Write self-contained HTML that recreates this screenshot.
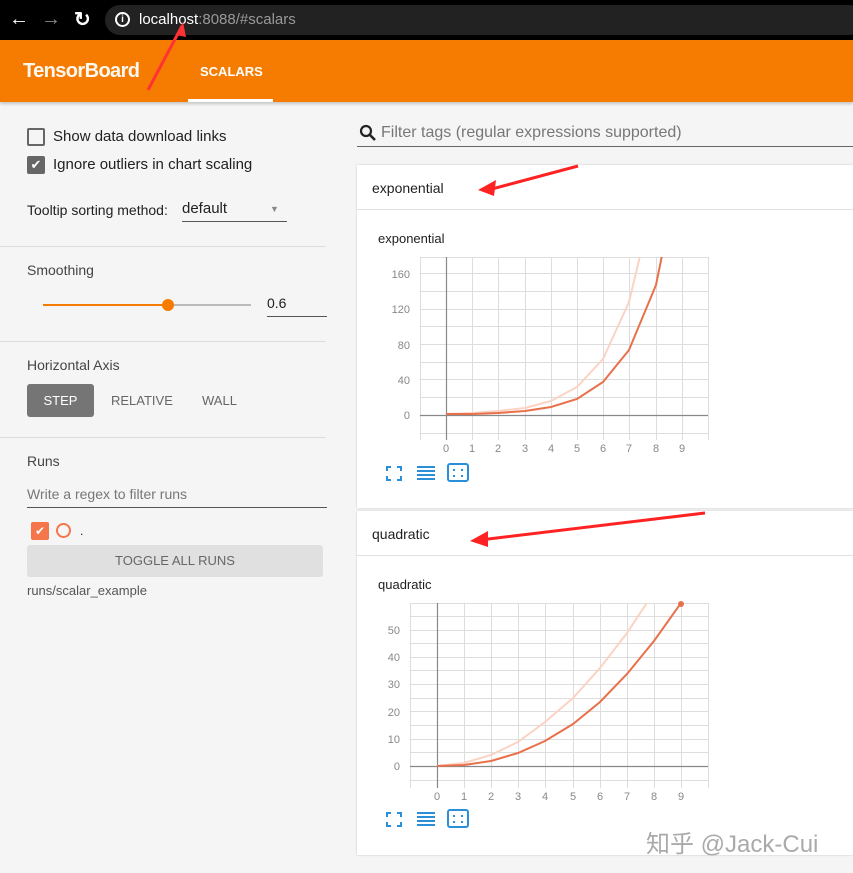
<!DOCTYPE html>
<html><head><meta charset="utf-8"><style>
*{margin:0;padding:0;box-sizing:border-box}
body{width:853px;height:873px;overflow:hidden;background:#f5f5f5;font-family:"Liberation Sans",sans-serif;position:relative;color:#212121}
.a{position:absolute;white-space:nowrap}
.hr{position:absolute;left:0;width:326px;height:1px;background:#ddd}
</style></head><body>
<div class="a" style="left:0;top:0;width:853px;height:40px;background:#000"></div>
<div class="a" style="left:105px;top:5px;width:760px;height:30px;background:#222;border-radius:15px"></div>
<div class="a" style="left:9px;top:8px;color:#fff;font-size:20px">&#8592;</div>
<div class="a" style="left:41px;top:8px;color:#888;font-size:20px">&#8594;</div>
<div class="a" style="left:74px;top:7px;color:#fff;font-size:20px;font-weight:bold">&#8635;</div>
<div class="a" style="left:115px;top:12px;width:15px;height:15px;border:2px solid #fff;border-radius:50%;color:#fff;font-size:10px;text-align:center;line-height:11px;font-weight:bold">i</div>
<div class="a" style="left:139px;top:11px;font-size:15px;color:#fff">localhost<span style="color:#999">:8088/#scalars</span></div>
<div class="a" style="left:0;top:40px;width:853px;height:62px;background:#f57c00;box-shadow:0 2px 3px rgba(0,0,0,.2)"></div>
<div class="a" style="left:23px;top:60px;font-size:20px;color:#fff;font-weight:bold;letter-spacing:-.6px;opacity:.95">TensorBoard</div>
<div class="a" style="left:200px;top:64px;font-size:13px;color:#fff;font-weight:bold">SCALARS</div>
<div class="a" style="left:188px;top:99px;width:85px;height:3px;background:#fff"></div>
<svg class="a" style="left:140px;top:20px" width="50" height="75"><path d="M148 90 L182 26" transform="translate(-140,-20)" stroke="#f33" stroke-width="3"/><path d="M176 35 L183 22 L186 37Z" transform="translate(-140,-20)" fill="#f33"/></svg>

<div class="a" style="left:27px;top:128px;width:18px;height:18px;border:2px solid #666;border-radius:2px"></div>
<div class="a" style="left:53px;top:128px;font-size:15px">Show data download links</div>
<div class="a" style="left:27px;top:156px;width:18px;height:18px;background:#666;border-radius:2px;color:#fff;font-size:13px;text-align:center;line-height:18px">&#10004;</div>
<div class="a" style="left:53px;top:156px;font-size:15px">Ignore outliers in chart scaling</div>
<div class="a" style="left:27px;top:202px;font-size:14px">Tooltip sorting method:</div>
<div class="a" style="left:182px;top:200px;font-size:15px">default</div>
<div class="a" style="left:270px;top:204px;font-size:9px;color:#888">&#9660;</div>
<div class="a" style="left:182px;top:221px;width:105px;height:1px;background:#555"></div>
<div class="hr" style="top:246px"></div>
<div class="a" style="left:27px;top:262px;font-size:14px;color:#444">Smoothing</div>
<div class="a" style="left:43px;top:304px;width:125px;height:2px;background:#f57c00"></div>
<div class="a" style="left:168px;top:304px;width:83px;height:2px;background:#bbb"></div>
<div class="a" style="left:162px;top:299px;width:12px;height:12px;border-radius:50%;background:#f57c00"></div>
<div class="a" style="left:267px;top:295px;font-size:14px">0.6</div>
<div class="a" style="left:267px;top:316px;width:60px;height:1px;background:#555"></div>
<div class="hr" style="top:341px"></div>
<div class="a" style="left:27px;top:357px;font-size:14px;color:#444">Horizontal Axis</div>
<div class="a" style="left:27px;top:384px;width:67px;height:33px;background:#757575;border-radius:3px;color:#fff;font-size:13px;text-align:center;line-height:33px">STEP</div>
<div class="a" style="left:111px;top:393px;font-size:13px;color:#666">RELATIVE</div>
<div class="a" style="left:202px;top:393px;font-size:13px;color:#666">WALL</div>
<div class="hr" style="top:437px"></div>
<div class="a" style="left:27px;top:453px;font-size:14px;color:#444">Runs</div>
<div class="a" style="left:27px;top:486px;font-size:14px;color:#777">Write a regex to filter runs</div>
<div class="a" style="left:27px;top:507px;width:300px;height:1px;background:#555"></div>
<div class="a" style="left:31px;top:522px;width:18px;height:18px;background:#f4764a;border-radius:2px;color:#fff;font-size:12px;text-align:center;line-height:18px">&#10004;</div>
<div class="a" style="left:56px;top:523px;width:15px;height:15px;border:2px solid #f4764a;border-radius:50%"></div>
<div class="a" style="left:80px;top:524px;font-size:12px">.</div>
<div class="a" style="left:27px;top:545px;width:296px;height:32px;background:#e0e0e0;border-radius:3px;color:#666;font-size:13px;text-align:center;line-height:32px">TOGGLE ALL RUNS</div>
<div class="a" style="left:27px;top:583px;font-size:13px;color:#555">runs/scalar_example</div>

<svg class="a" style="left:359px;top:124px" width="18" height="18"><circle cx="7" cy="7" r="5" fill="none" stroke="#222" stroke-width="2.2"/><path d="M11 11 L16 16" stroke="#222" stroke-width="2.6"/></svg>
<div class="a" style="left:381px;top:124px;font-size:16px;color:#777">Filter tags (regular expressions supported)</div>
<div class="a" style="left:357px;top:146px;width:496px;height:1px;background:#666"></div>

<div class="a" style="left:357px;top:165px;width:496px;height:343px;background:#fff;box-shadow:0 0 2px rgba(0,0,0,.2)"></div>
<div class="a" style="left:357px;top:209px;width:496px;height:1px;background:#e0e0e0"></div>
<div class="a" style="left:372px;top:180px;font-size:14px">exponential</div>
<div class="a" style="left:378px;top:231px;font-size:13px">exponential</div>
<div class="a" style="left:357px;top:511px;width:496px;height:344px;background:#fff;box-shadow:0 0 2px rgba(0,0,0,.2)"></div>
<div class="a" style="left:357px;top:555px;width:496px;height:1px;background:#e0e0e0"></div>
<div class="a" style="left:372px;top:526px;font-size:14px">quadratic</div>
<div class="a" style="left:378px;top:577px;font-size:13px">quadratic</div>

<svg class="a" style="left:0;top:0" width="853" height="873" font-family="Liberation Sans" font-size="11" fill="#888">
<defs><clipPath id="c1"><rect x="420" y="257" width="288" height="177"/></clipPath><clipPath id="c2"><rect x="410" y="603" width="298" height="179"/></clipPath></defs>
<g stroke="#ddd" stroke-width="1">
<path d="M420.5 257V440M472.5 257V440M498.5 257V440M525.5 257V440M551.5 257V440M577.5 257V440M603.5 257V440M629.5 257V440M656.5 257V440M682.5 257V440M708.5 257V440"/>
<path d="M420 433.5H708M420 397.5H708M420 379.5H708M420 362.5H708M420 344.5H708M420 326.5H708M420 309.5H708M420 291.5H708M420 273.5H708M420 257.5H708"/>
<path d="M410.5 603V788M464.5 603V788M491.5 603V788M518.5 603V788M545.5 603V788M573.5 603V788M600.5 603V788M627.5 603V788M654.5 603V788M681.5 603V788M708.5 603V788"/>
<path d="M410 780.5H708M410 752.5H708M410 739.5H708M410 725.5H708M410 711.5H708M410 698.5H708M410 684.5H708M410 670.5H708M410 657.5H708M410 643.5H708M410 630.5H708M410 616.5H708M410 603.5H708"/>
</g>
<path d="M446.5 257V440M420 415.5H708M437.5 603V788M410 766.5H708" stroke="#888" stroke-width="1.2"/>
<g clip-path="url(#c1)" fill="none" stroke-width="2">
<polyline stroke="#fbd3c4" points="446,414 472,413 498,411 525,408 551,401 577,387 603,359 629,302 656,189"/>
<polyline stroke="#e8704a" points="446,414 472,414 498,413 525,411 551,407 577,399 603,382 629,350 656,285 682,157"/>
</g>
<g clip-path="url(#c2)" fill="none" stroke-width="2">
<polyline stroke="#fbd3c4" points="437,766 464,763 491,755 518,742 545,722 573,698 600,668 627,633 654,592"/>
<polyline stroke="#e8704a" points="437,766 464,765 491,761 518,753 545,741 573,724 600,702 627,674 654,641 681,603"/>
</g>
<circle cx="681" cy="604" r="3" fill="#e8704a"/>
<g text-anchor="end"><text x="410" y="278">160</text><text x="410" y="313">120</text><text x="410" y="349">80</text><text x="410" y="384">40</text><text x="410" y="419">0</text>
<text x="400" y="634">50</text><text x="400" y="661">40</text><text x="400" y="688">30</text><text x="400" y="716">20</text><text x="400" y="743">10</text><text x="400" y="770">0</text></g>
<g text-anchor="middle"><text x="446" y="452">0</text><text x="472" y="452">1</text><text x="498" y="452">2</text><text x="525" y="452">3</text><text x="551" y="452">4</text><text x="577" y="452">5</text><text x="603" y="452">6</text><text x="629" y="452">7</text><text x="656" y="452">8</text><text x="682" y="452">9</text>
<text x="437" y="800">0</text><text x="464" y="800">1</text><text x="491" y="800">2</text><text x="518" y="800">3</text><text x="545" y="800">4</text><text x="573" y="800">5</text><text x="600" y="800">6</text><text x="627" y="800">7</text><text x="654" y="800">8</text><text x="681" y="800">9</text></g>
<g stroke="#2a8fd8" stroke-width="2" fill="none">
<path d="M387 471v-4h4M397 467h4v4M401 476v4h-4M391 480h-4v-4"/>
<path d="M417 467h18M417 471h18M417 475h18M417 479h18"/>
<rect x="448" y="464" width="20" height="17" rx="2"/>
<path d="M387 817v-4h4M397 813h4v4M401 822v4h-4M391 826h-4v-4"/>
<path d="M417 813h18M417 817h18M417 821h18M417 825h18"/>
<rect x="448" y="810" width="20" height="17" rx="2"/>
</g>
<g fill="#2a8fd8"><rect x="453" y="469" width="2" height="2"/><rect x="461" y="469" width="2" height="2"/><rect x="453" y="475" width="2" height="2"/><rect x="461" y="475" width="2" height="2"/>
<rect x="453" y="815" width="2" height="2"/><rect x="461" y="815" width="2" height="2"/><rect x="453" y="821" width="2" height="2"/><rect x="461" y="821" width="2" height="2"/></g>
<path d="M578 166 L488 190" stroke="#f22" stroke-width="3"/><path d="M478 190 L496 180 L494 196Z" fill="#f22"/>
<path d="M705 513 L480 540" stroke="#f22" stroke-width="3"/><path d="M470 541 L488 531 L488 547Z" fill="#f22"/>
</svg>
<div class="a" style="left:646px;top:824px;font-size:24px;color:#aaa;font-family:'Liberation Sans','Noto Sans CJK SC',sans-serif">知乎 @Jack-Cui</div>
</body></html>
